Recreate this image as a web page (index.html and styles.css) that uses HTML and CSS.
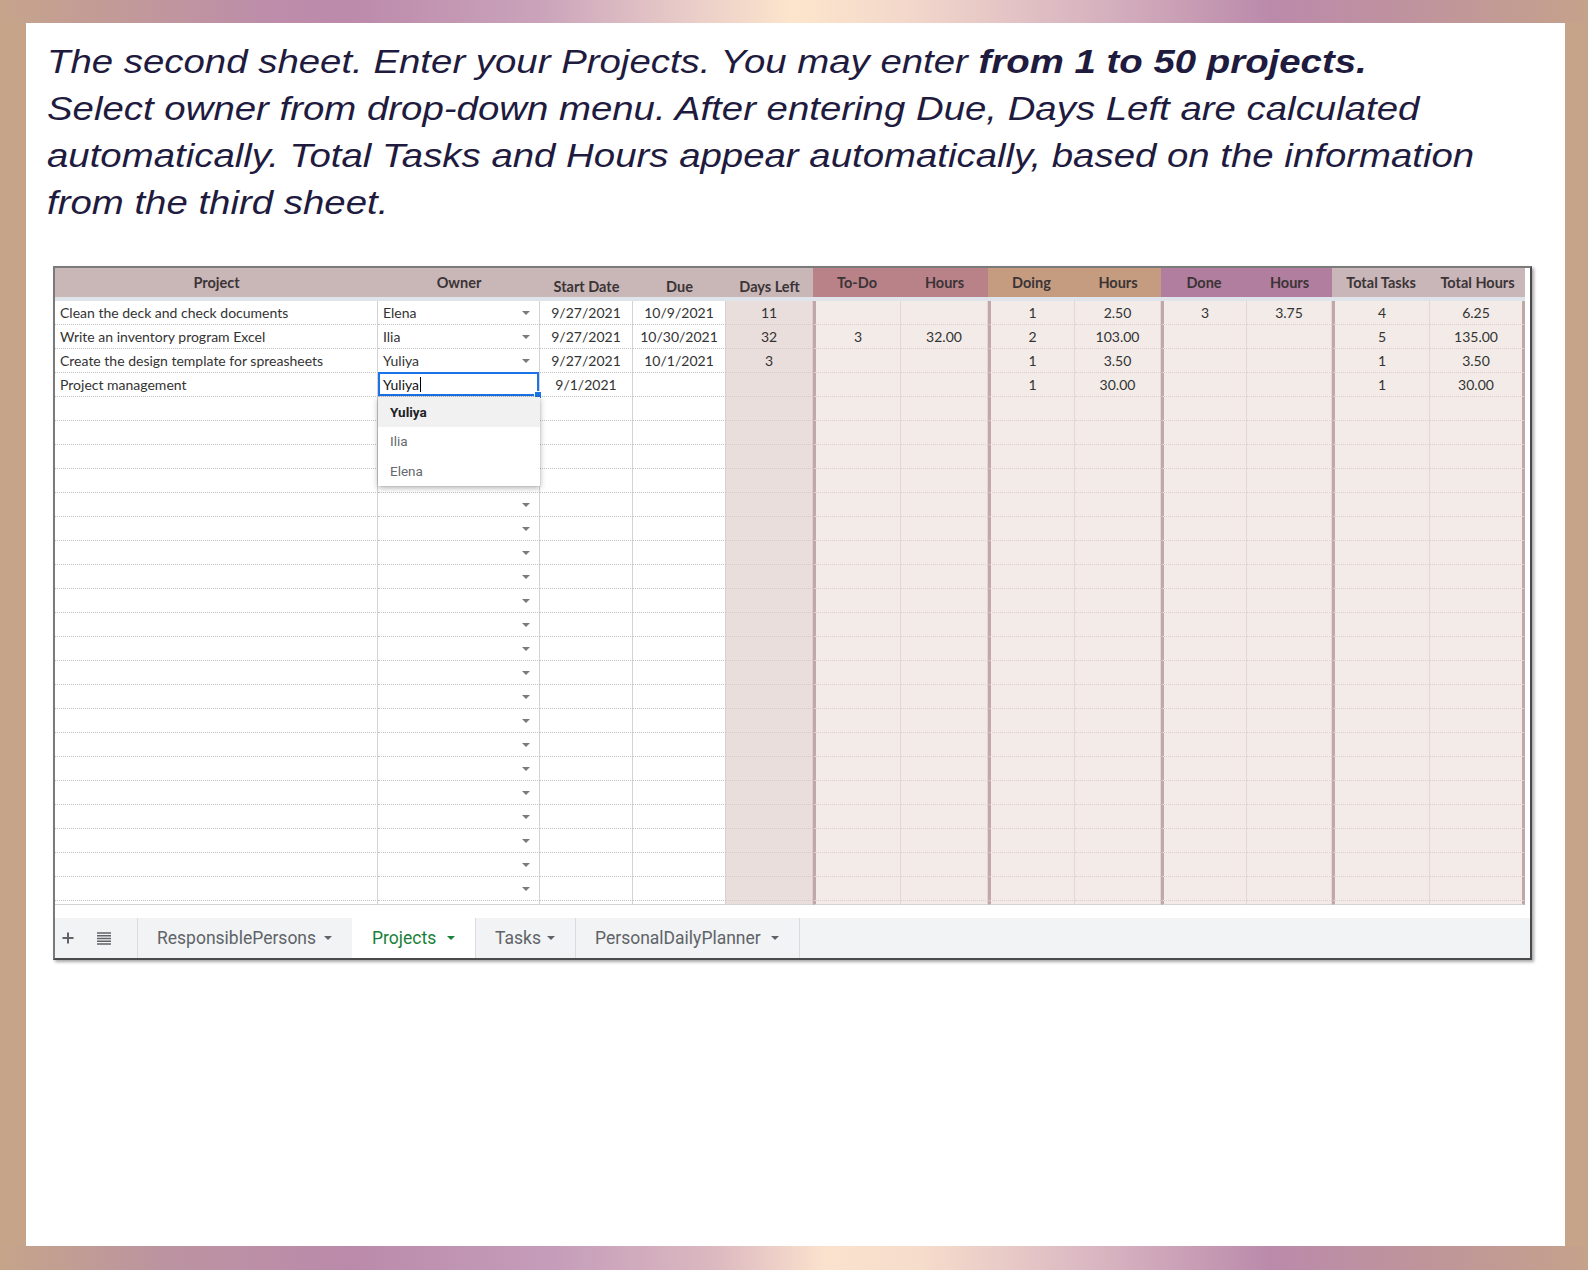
FILE: index.html
```html
<!DOCTYPE html>
<html>
<head>
<meta charset="utf-8">
<link rel="stylesheet" href="styles.css">
</head>
<body>
<div class="panel">
  <p class="intro">The second sheet. Enter your Projects. You may enter <b>from 1 to 50 projects.</b><br>Select owner from drop-down menu. After entering Due, Days Left are calculated<br>automatically. Total Tasks and Hours appear automatically, based on the information<br>from the third sheet.</p>

  <div class="sheet">
    <div class="head">
      <span class="h-base">Project</span>
      <span class="h-base">Owner</span>
      <span class="h-base low">Start Date</span>
      <span class="h-base low">Due</span>
      <span class="h-base low">Days Left</span>
      <span class="h-todo">To-Do</span>
      <span class="h-todo">Hours</span>
      <span class="h-doing">Doing</span>
      <span class="h-doing">Hours</span>
      <span class="h-done">Done</span>
      <span class="h-done">Hours</span>
      <span class="h-total">Total Tasks</span>
      <span class="h-total">Total Hours</span>
    </div>
    <div class="freeze"></div>
    <div class="body">
      <div class="row dd"><span>Clean the deck and check documents</span><span>Elena</span><span>9/27/2021</span><span>10/9/2021</span><span>11</span><span></span><span></span><span>1</span><span>2.50</span><span>3</span><span>3.75</span><span>4</span><span>6.25</span></div>
      <div class="row dd"><span>Write an inventory program Excel</span><span>Ilia</span><span>9/27/2021</span><span>10/30/2021</span><span>32</span><span>3</span><span>32.00</span><span>2</span><span>103.00</span><span></span><span></span><span>5</span><span>135.00</span></div>
      <div class="row dd"><span>Create the design template for spreasheets</span><span>Yuliya</span><span>9/27/2021</span><span>10/1/2021</span><span>3</span><span></span><span></span><span>1</span><span>3.50</span><span></span><span></span><span>1</span><span>3.50</span></div>
      <div class="row"><span>Project management</span><span class="edit">Yuliya<i class="caret"></i>
          <div class="menu">
            <div class="opt on">Yuliya</div>
            <div class="opt">Ilia</div>
            <div class="opt">Elena</div>
          </div>
        </span><span>9/1/2021</span><span></span><span></span><span></span><span></span><span>1</span><span>30.00</span><span></span><span></span><span>1</span><span>30.00</span></div>
      <div class="row dd"><span></span><span></span><span></span><span></span><span></span><span></span><span></span><span></span><span></span><span></span><span></span><span></span><span></span></div>
      <div class="row dd"><span></span><span></span><span></span><span></span><span></span><span></span><span></span><span></span><span></span><span></span><span></span><span></span><span></span></div>
      <div class="row dd"><span></span><span></span><span></span><span></span><span></span><span></span><span></span><span></span><span></span><span></span><span></span><span></span><span></span></div>
      <div class="row dd"><span></span><span></span><span></span><span></span><span></span><span></span><span></span><span></span><span></span><span></span><span></span><span></span><span></span></div>
      <div class="row dd"><span></span><span></span><span></span><span></span><span></span><span></span><span></span><span></span><span></span><span></span><span></span><span></span><span></span></div>
      <div class="row dd"><span></span><span></span><span></span><span></span><span></span><span></span><span></span><span></span><span></span><span></span><span></span><span></span><span></span></div>
      <div class="row dd"><span></span><span></span><span></span><span></span><span></span><span></span><span></span><span></span><span></span><span></span><span></span><span></span><span></span></div>
      <div class="row dd"><span></span><span></span><span></span><span></span><span></span><span></span><span></span><span></span><span></span><span></span><span></span><span></span><span></span></div>
      <div class="row dd"><span></span><span></span><span></span><span></span><span></span><span></span><span></span><span></span><span></span><span></span><span></span><span></span><span></span></div>
      <div class="row dd"><span></span><span></span><span></span><span></span><span></span><span></span><span></span><span></span><span></span><span></span><span></span><span></span><span></span></div>
      <div class="row dd"><span></span><span></span><span></span><span></span><span></span><span></span><span></span><span></span><span></span><span></span><span></span><span></span><span></span></div>
      <div class="row dd"><span></span><span></span><span></span><span></span><span></span><span></span><span></span><span></span><span></span><span></span><span></span><span></span><span></span></div>
      <div class="row dd"><span></span><span></span><span></span><span></span><span></span><span></span><span></span><span></span><span></span><span></span><span></span><span></span><span></span></div>
      <div class="row dd"><span></span><span></span><span></span><span></span><span></span><span></span><span></span><span></span><span></span><span></span><span></span><span></span><span></span></div>
      <div class="row dd"><span></span><span></span><span></span><span></span><span></span><span></span><span></span><span></span><span></span><span></span><span></span><span></span><span></span></div>
      <div class="row dd"><span></span><span></span><span></span><span></span><span></span><span></span><span></span><span></span><span></span><span></span><span></span><span></span><span></span></div>
      <div class="row dd"><span></span><span></span><span></span><span></span><span></span><span></span><span></span><span></span><span></span><span></span><span></span><span></span><span></span></div>
      <div class="row dd"><span></span><span></span><span></span><span></span><span></span><span></span><span></span><span></span><span></span><span></span><span></span><span></span><span></span></div>
      <div class="row dd"><span></span><span></span><span></span><span></span><span></span><span></span><span></span><span></span><span></span><span></span><span></span><span></span><span></span></div>
      <div class="row dd"><span></span><span></span><span></span><span></span><span></span><span></span><span></span><span></span><span></span><span></span><span></span><span></span><span></span></div>
      <div class="row dd"><span></span><span></span><span></span><span></span><span></span><span></span><span></span><span></span><span></span><span></span><span></span><span></span><span></span></div>
      <div class="row part"><span></span><span></span><span></span><span></span><span></span><span></span><span></span><span></span><span></span><span></span><span></span><span></span><span></span></div>
    </div>
    <div class="gap"></div>
    <div class="tabbar">
      <div class="tb-icons">
        <svg class="plus" width="12" height="12" viewBox="0 0 12 12"><path d="M6 0.5v11M0.5 6h11" stroke="#5f6368" stroke-width="2"/></svg>
        <svg class="list" width="14" height="13" viewBox="0 0 14 13"><path d="M0 1h14M0 3.75h14M0 6.5h14M0 9.25h14M0 12h14" stroke="#5f6368" stroke-width="1.4"/></svg>
      </div>
      <div class="tab t-resp">ResponsiblePersons<i class="tri"></i></div>
      <div class="tab t-proj active">Projects<i class="tri"></i></div>
      <div class="tab t-task">Tasks<i class="tri"></i></div>
      <div class="tab t-plan last">PersonalDailyPlanner<i class="tri"></i></div>
    </div>
  </div>
</div>
</body>
</html>
```

FILE: styles.css
```css
* { box-sizing: border-box; }
html, body { margin: 0; }
body {
  width: 1588px;
  height: 1270px;
  padding: 23px 23px 24px 26px;
  background:
    linear-gradient(90deg, #c6a48b 0%, #bd8daa 17%, #bc8aab 22%, #caa3ba 34%, #e8cbc8 43%, #fde5cc 50%, #f3d8cb 57%, #d9b6c0 68%, #bb8aab 80%, #bf929f 88%, #c5a28b 100%) top left / 100% 23px no-repeat,
    linear-gradient(90deg, #c6a48a 0%, #bc94a0 10%, #bb8aab 22%, #c59dba 35%, #dcb8c0 45%, #fbe2cd 52%, #f6dccb 58%, #dcbac3 68%, #bb8aab 80%, #bf959a 90%, #c5a28b 100%) bottom left / 100% 24px no-repeat,
    #c6a48a;
  overflow: hidden;
}
.panel {
  background: #ffffff;
  height: 100%;
  padding: 15px 0 0 21px;
}
.intro {
  margin: 0;
  width: max-content;
  font-family: "Liberation Sans", Arial, sans-serif;
  font-style: italic;
  font-size: 33px;
  line-height: 47px;
  color: #1f1b3e;
  white-space: nowrap;
  transform: scaleX(1.163);
  transform-origin: left top;
}
.intro b { font-weight: bold; }

.sheet {
  margin: 40px 0 0 6px;
  width: 1479px;
  border: 2px solid #7a7a7a;
  border-right-color: #4a4a4a;
  border-bottom-color: #4a4a4a;
  box-shadow: 2px 2px 3px rgba(0,0,0,0.35);
  background: #ffffff;
  font-family: Lato, "Open Sans", sans-serif;
}
.head, .row {
  display: grid;
  grid-template-columns: 323px 162px 93px 93px 87px 88px 87px 87px 86px 86px 85px 98px 95px;
}
.head { height: 29px; }
.head span {
  display: flex;
  align-items: center;
  justify-content: center;
  font-weight: bold;
  font-size: 14.5px;
  color: #3b3436;
  white-space: nowrap;
}
.head span.low { padding-top: 7px; }
.h-base { background: #c9b6b7; }
.h-todo { background: #b98289; }
.h-doing { background: #c69c81; }
.h-done { background: #b27e9f; }
.h-total { background: #c9b6b9; }
.freeze { height: 4px; width: 1470px; background: #dfe3ea; }

.row { height: 24px; }
.row span {
  display: flex;
  align-items: center;
  justify-content: center;
  font-size: 14px;
  color: #333333;
  border-right: 1px solid #d3d3d3;
  border-bottom: 1px dotted #c4c4c4;
  white-space: nowrap;
}
.row span:nth-child(1), .row span:nth-child(2) {
  justify-content: flex-start;
  padding-left: 5px;
}
.row span:nth-child(5) {
  background: #e9dedb;
  border-right-color: #e0d0cd;
  border-bottom-color: #d8cac6;
}
.row span:nth-child(n+6) {
  background: #f2ebe7;
  border-right-color: #e4d6d2;
  border-bottom-color: #dccfca;
}
.row span:nth-child(6), .row span:nth-child(8), .row span:nth-child(10), .row span:nth-child(12) {
  border-left: 3px solid #c0a8aa;
}
.row span:nth-child(13) { border-right: 3px solid #c0a8aa; }
.row.dd span:nth-child(2)::after {
  content: "";
  margin-left: auto;
  margin-right: 9px;
  border-left: 4px solid transparent;
  border-right: 4px solid transparent;
  border-top: 4px solid #7a7a7a;
}
.row.part { height: 4px; }
.row.part span { border-bottom: 1px solid #d3d3d3; }

.row span.edit {
  position: relative;
  box-shadow: inset 0 0 0 2px #1a73e8;
  margin: -1px 0 0 0;
  padding-left: 5px;
  color: #111;
}
.edit::before {
  content: "";
  position: absolute;
  right: -3px;
  bottom: -3px;
  width: 6px;
  height: 6px;
  background: #1a73e8;
  border: 1px solid #fff;
}
.caret {
  display: inline-block;
  width: 1px;
  height: 15px;
  background: #000;
  margin-left: 1px;
}
.menu {
  position: absolute;
  top: 100%;
  left: 0;
  width: 162px;
  margin-top: 1px;
  background: #fff;
  box-shadow: 0 2px 6px rgba(0,0,0,0.3), 0 0 1px rgba(0,0,0,0.25);
  z-index: 5;
  font-family: Roboto, "Open Sans", sans-serif;
}
.opt {
  height: 29.5px;
  display: flex;
  align-items: center;
  padding-left: 12px;
  font-size: 13.5px;
  color: #666a6e;
}
.opt.on {
  background: #f1f1f1;
  font-weight: bold;
  color: #202124;
}

.gap { height: 13px; }
.tabbar {
  display: flex;
  height: 40px;
  background: #f1f3f4;
  font-family: Roboto, "Open Sans", sans-serif;
}
.tb-icons {
  width: 82px;
  display: flex;
  align-items: center;
  gap: 23px;
  padding-left: 7px;
}
.tab {
  display: flex;
  align-items: center;
  justify-content: space-between;
  padding: 0 20px 0 19px;
  border-left: 1px solid #dadce0;
  font-size: 17.5px;
  font-weight: 400;
  color: #5f6368;
}
.t-resp { width: 215px; }
.t-proj { width: 123px; }
.t-task { width: 100px; }
.t-plan { width: 225px; }
.tab.last { border-right: 1px solid #dadce0; }
.tab.active { background: #ffffff; color: #188038; border-left-color: transparent; }
.tri {
  display: inline-block;
  border-left: 4px solid transparent;
  border-right: 4px solid transparent;
  border-top: 4px solid #5f6368;
}
.tab.active .tri { border-top-color: #188038; }
```
